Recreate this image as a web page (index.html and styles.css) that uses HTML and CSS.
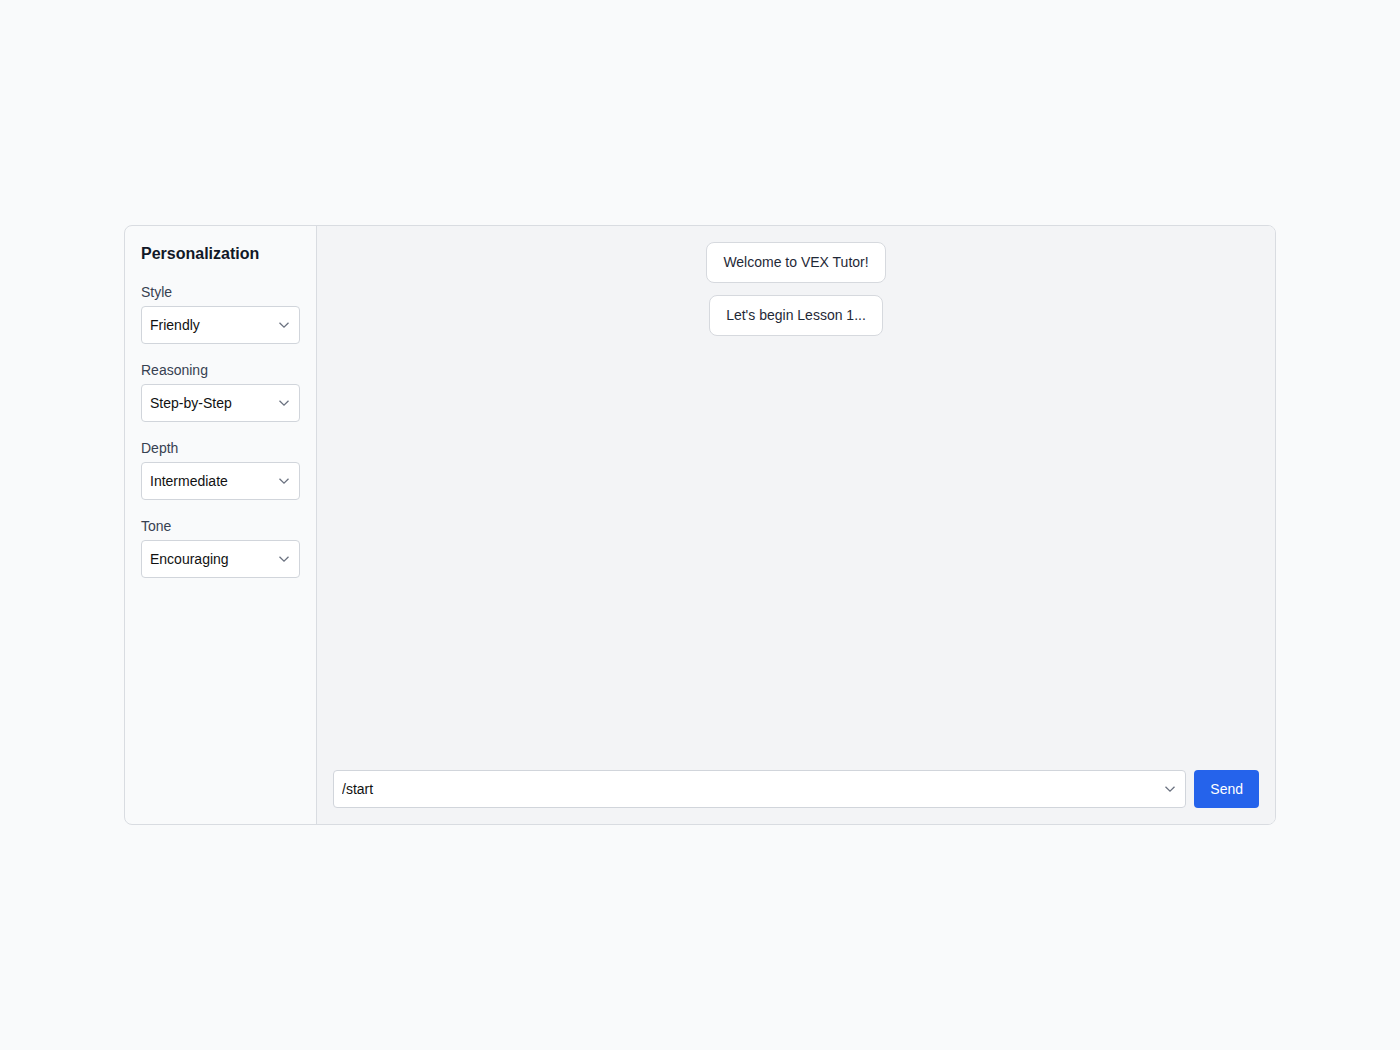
FILE: index.html
```html
<!DOCTYPE html>
<html lang="en">
<head>
    <meta charset="UTF-8">
    <meta name="viewport" content="width=device-width, initial-scale=1.0">
    <title>VEX Tutor</title>
    <link rel="stylesheet" href="styles.css">
</head>
<body>
    <div class="app">
        <aside class="sidebar">
            <h2>Personalization</h2>

            <label class="field-label" for="style">Style</label>
            <div class="select-wrap">
                <select id="style">
                    <option>Friendly</option>
                    <option>Formal</option>
                </select>
                <svg class="chevron" viewBox="0 0 12 12"><path d="M1.5 3.8 6 8.2l4.5-4.4"/></svg>
            </div>

            <label class="field-label" for="reasoning">Reasoning</label>
            <div class="select-wrap">
                <select id="reasoning">
                    <option>Step-by-Step</option>
                    <option>Direct</option>
                </select>
                <svg class="chevron" viewBox="0 0 12 12"><path d="M1.5 3.8 6 8.2l4.5-4.4"/></svg>
            </div>

            <label class="field-label" for="depth">Depth</label>
            <div class="select-wrap">
                <select id="depth">
                    <option>Intermediate</option>
                    <option>Beginner</option>
                    <option>Advanced</option>
                </select>
                <svg class="chevron" viewBox="0 0 12 12"><path d="M1.5 3.8 6 8.2l4.5-4.4"/></svg>
            </div>

            <label class="field-label" for="tone">Tone</label>
            <div class="select-wrap">
                <select id="tone">
                    <option>Encouraging</option>
                    <option>Neutral</option>
                </select>
                <svg class="chevron" viewBox="0 0 12 12"><path d="M1.5 3.8 6 8.2l4.5-4.4"/></svg>
            </div>
        </aside>

        <main class="chat">
            <div class="messages">
                <div class="bubble">Welcome to VEX Tutor!</div>
                <div class="bubble">Let's begin Lesson 1...</div>
            </div>

            <div class="composer">
                <div class="select-wrap grow">
                    <select id="command">
                        <option>/start</option>
                        <option>/next</option>
                        <option>/help</option>
                    </select>
                    <svg class="chevron" viewBox="0 0 12 12"><path d="M1.5 3.8 6 8.2l4.5-4.4"/></svg>
                </div>
                <button class="send">Send</button>
            </div>
        </main>
    </div>
</body>
</html>
```

FILE: styles.css
```css
* {
    box-sizing: border-box;
}
body {
    font-family: "Liberation Sans", Arial, sans-serif;
    margin: 0;
    background-color: #f9fafb;
    color: #111827;
    min-height: 100vh;
    display: flex;
    align-items: center;
    justify-content: center;
}
.app {
    width: 1152px;
    height: 600px;
    display: flex;
    background: #f9fafb;
    border: 1px solid #d9dce1;
    border-radius: 8px;
    overflow: hidden;
}
.sidebar {
    width: 192px;
    flex-shrink: 0;
    padding: 16px;
    border-right: 1px solid #d9dce1;
    display: flex;
    flex-direction: column;
}
.sidebar h2 {
    margin: 0 0 16px;
    font-size: 16px;
    line-height: 24px;
    font-weight: bold;
    color: #111827;
}
.field-label {
    font-size: 14px;
    line-height: 20px;
    color: #374151;
    margin-bottom: 4px;
}
.select-wrap {
    position: relative;
    margin-bottom: 16px;
}
.select-wrap select {
    width: 100%;
    height: 38px;
    padding: 0 28px 0 8px;
    font-family: inherit;
    font-size: 14px;
    color: #111111;
    background: #fff;
    border: 1px solid #d1d5db;
    border-radius: 4px;
    appearance: none;
    -webkit-appearance: none;
    outline: none;
}
.chevron {
    position: absolute;
    right: 10px;
    top: 13px;
    width: 12px;
    height: 12px;
    fill: none;
    stroke: #6b7280;
    stroke-width: 1.3;
    pointer-events: none;
}
.chat {
    flex: 1;
    display: flex;
    flex-direction: column;
    padding: 16px;
    background: #f3f4f6;
}
.messages {
    flex: 1;
    display: flex;
    flex-direction: column;
    align-items: center;
    gap: 12px;
}
.bubble {
    background: #fff;
    border: 1px solid #d6d9de;
    border-radius: 8px;
    padding: 10px 16px;
    font-size: 14px;
    line-height: 19px;
    color: #1f2937;
}
.composer {
    display: flex;
    gap: 8px;
}
.composer .select-wrap {
    margin-bottom: 0;
}
.grow {
    flex: 1;
}
.send {
    height: 38px;
    padding: 0 16px;
    background-color: #2563eb;
    color: #fff;
    border: none;
    border-radius: 4px;
    font-family: inherit;
    font-size: 14px;
    cursor: pointer;
}
.send:hover {
    background-color: #1d4ed8;
}
```
